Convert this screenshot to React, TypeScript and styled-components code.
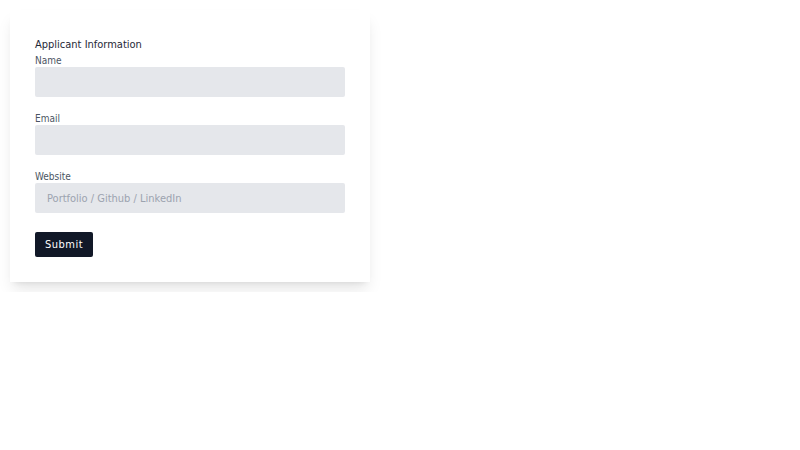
import React from "react";
import styled, { createGlobalStyle } from "styled-components";

const GlobalStyle = createGlobalStyle`
  body {
    margin: 0;
    background: #ffffff;
    font-family: "DejaVu Sans Condensed", "DejaVu Sans", "Liberation Sans", sans-serif;
    font-stretch: condensed;
  }
`;

type Field = {
  id: string;
  label: string;
  placeholder?: string;
};

const fields: Field[] = [
  { id: "name", label: "Name" },
  { id: "email", label: "Email" },
  { id: "website", label: "Website", placeholder: "Portfolio / Github / LinkedIn" },
];

export default function App() {
  return (
    <>
      <GlobalStyle />
      <Card>
        <Title>Applicant Information</Title>
        {fields.map((f) => (
          <Group key={f.id}>
            <Label htmlFor={f.id}>{f.label}</Label>
            <Input id={f.id} placeholder={f.placeholder} />
          </Group>
        ))}
        <Button type="button">Submit</Button>
      </Card>
    </>
  );
}

const Card = styled.div`
  width: 310px;
  margin: 10px;
  padding: 25px;
  background: #ffffff;
  box-shadow: 0 10px 15px -3px rgba(0, 0, 0, 0.1),
    0 4px 6px -4px rgba(0, 0, 0, 0.1);
`;

const Title = styled.h2`
  margin: 3px 0 2px;
  font-size: 11px;
  font-weight: 400;
  line-height: 14px;
  color: #1f2937;
`;

const Group = styled.div`
  display: flex;
  flex-direction: column;
  margin-bottom: 15px;
`;

const Label = styled.label`
  font-size: 10px;
  line-height: 13px;
  color: #4b5563;
`;

const Input = styled.input`
  box-sizing: border-box;
  height: 30px;
  width: 100%;
  border: none;
  border-radius: 2px;
  background: #e5e7eb;
  padding: 0 12px;
  font-family: inherit;
  font-stretch: inherit;
  font-size: 11px;
  color: #111827;
  outline: none;
  &::placeholder {
    color: #9ca3af;
  }
`;

const Button = styled.button`
  display: block;
  margin-top: 19px;
  height: 25px;
  padding: 0 10px;
  border: none;
  border-radius: 2px;
  background: #111827;
  color: #ffffff;
  font-family: inherit;
  font-stretch: inherit;
  font-size: 11px;
  letter-spacing: 0.5px;
`;
